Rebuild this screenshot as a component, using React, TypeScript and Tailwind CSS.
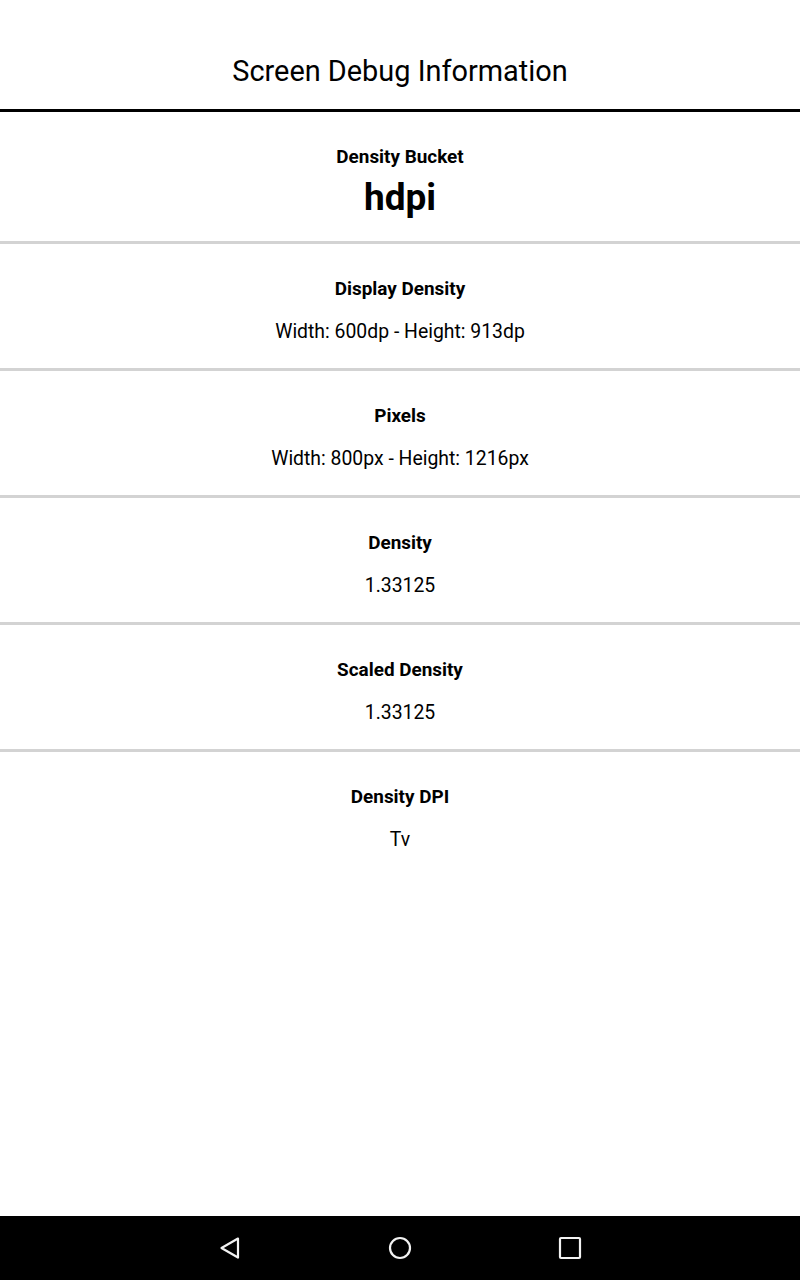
import React from "react";

type Row = { label: string; value: string };

const rows: Row[] = [
  { label: "Display Density", value: "Width: 600dp - Height: 913dp" },
  { label: "Pixels", value: "Width: 800px - Height: 1216px" },
  { label: "Density", value: "1.33125" },
  { label: "Scaled Density", value: "1.33125" },
];

const InfoRow = ({ label, value }: Row) => (
  <div className="h-[124px] flex flex-col items-center pt-[33px] gap-[19px]">
    <div className="text-[18.9px] leading-[24px] font-bold text-black">{label}</div>
    <div className="text-[19.4px] leading-[24px] text-black">{value}</div>
  </div>
);

const Divider = () => <div className="h-[3px] bg-[#d3d3d3]" />;

export default function App() {
  return (
    <div
      className="w-[800px] h-[1280px] flex flex-col bg-white overflow-hidden"
      style={{ fontFamily: "Roboto, 'Noto Sans', sans-serif" }}
    >
      <header className="h-[109px] flex items-start justify-center pt-[53px]">
        <h1 className="text-[28.9px] leading-[36px] text-black">Screen Debug Information</h1>
      </header>
      <div className="h-[3px] bg-black" />

      <div className="h-[129px] flex flex-col items-center pt-[33px] gap-[9px]">
        <div className="text-[18.9px] leading-[24px] font-bold text-black">Density Bucket</div>
        <div className="text-[37px] leading-[40px] font-bold text-black">hdpi</div>
      </div>

      {rows.map((r) => (
        <React.Fragment key={r.label}>
          <Divider />
          <InfoRow {...r} />
        </React.Fragment>
      ))}
      <Divider />

      <div className="flex-1 flex flex-col items-center pt-[33px] gap-[19px]">
        <div className="text-[18.9px] leading-[24px] font-bold text-black">Density DPI</div>
        <div className="text-[19.4px] leading-[24px] text-black">Tv</div>
      </div>

      <nav className="h-[64px] bg-black flex items-center justify-center">
        <div className="w-[440px] flex items-center justify-between px-[38px]">
          <svg width="24" height="24" viewBox="0 0 24 24" fill="none" stroke="#f2f2f2" strokeWidth="2.2" strokeLinejoin="round">
            <path d="M20 2.5 L3.5 12 L20 21.5 Z" />
          </svg>
          <svg width="24" height="24" viewBox="0 0 24 24" fill="none" stroke="#f2f2f2" strokeWidth="2.2">
            <circle cx="12" cy="12" r="10" />
          </svg>
          <svg width="24" height="24" viewBox="0 0 24 24" fill="none" stroke="#f2f2f2" strokeWidth="2.2" strokeLinejoin="round">
            <rect x="2" y="2" width="20" height="20" rx="1" />
          </svg>
        </div>
      </nav>
    </div>
  );
}
